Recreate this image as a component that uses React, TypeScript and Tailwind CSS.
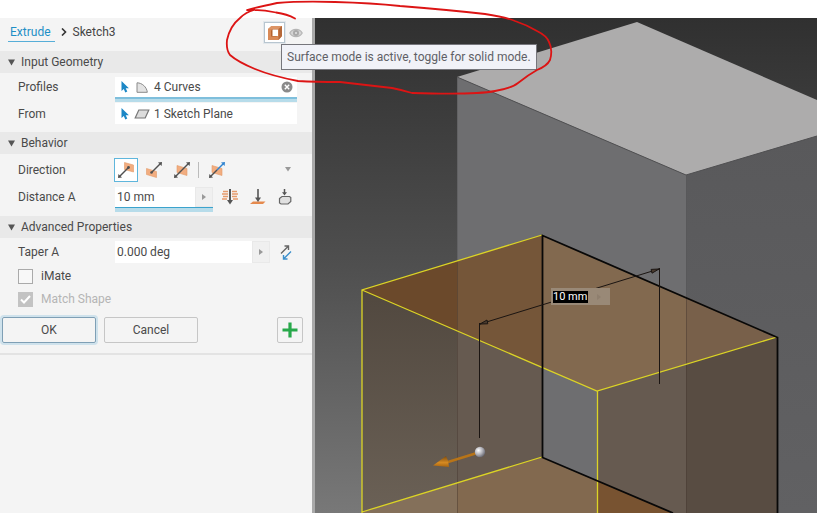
import { useState, type ReactNode } from "react";
import clsx from "clsx";

function Section({ title, children }: { title: string; children: ReactNode }) {
  return (
    <section>
      <h2 className="h-[22px] bg-[#e9e9e9]">
        <button type="button" className="flex h-full w-full items-center gap-1.5 pl-2 text-left text-[#4a4a4a]">
          <svg width="7" height="7" viewBox="0 0 7 7"><path d="M0 0.5h7L3.5 6.5z" fill="#555" /></svg>
          {title}
        </button>
      </h2>
      {children}
    </section>
  );
}

function PickArrow() {
  return (
    <svg width="8" height="12" viewBox="0 0 8 12">
      <path d="M0.5 0v10l2.300-2 1.500 3.500 2-.9-1.600-3.300h3.200z" fill="#1b87c6" />
    </svg>
  );
}

function ProfileIcon() {
  return (
    <svg width="12" height="11" viewBox="0 0 12 11">
      <path d="M1 .8C6 .8 10.8 5 11.3 10.3H1z" fill="#e3e3e3" stroke="#8a8a8a" />
    </svg>
  );
}

function PlaneIcon() {
  return (
    <svg width="16" height="10" viewBox="0 0 16 10">
      <path d="M4.8 1h10L11.2 9h-10z" fill="#dcdcdc" stroke="#777" strokeWidth="1.2" />
    </svg>
  );
}

function SurfaceIcon() {
  return (
    <svg width="16" height="16" viewBox="0 0 16 16">
      <path d="M1 4l3.500-3H15v10l-3.500 4H1z" fill="#d98a57" />
      <path d="M1 4l3.500-3H15l-3.500 3z" fill="#dc9465" />
      <path d="M11.500 4L15 1v10l-3.500 4z" fill="#b5683a" />
      <path d="M4 5.500L5.500 4H11v6l-1.500 1.500H4z" fill="#b5632f" />
      <path d="M5.500 4.500h5.500v6.500H5.500z" fill="#fff" />
    </svg>
  );
}

function EyeIcon() {
  return (
    <svg width="14" height="10" viewBox="0 0 14 10">
      <path d="M.8 5C3.500 .2 10.500 .2 13.200 5 10.500 9.800 3.500 9.800 .8 5z" fill="#d4d4d4" stroke="#b5b5b5" strokeWidth="1.200" />
      <circle cx="7" cy="5" r="3" fill="#a9a9a9" />
      <circle cx="7" cy="5" r="1" fill="#e5e5e5" />
    </svg>
  );
}

type DirectionKind = "default" | "flipped" | "symmetric" | "asymmetric";

function DirectionIcon({ kind }: { kind: DirectionKind }) {
  return (
    <svg width="18" height="18" viewBox="0 0 18 18">
      {kind === "default" && (
        <>
          <path d="M7.500 1.500l9 2.500v7l-9-2.500z" fill="#f2ad80" stroke="#e39a68" strokeWidth=".6" />
          <path d="M3 15l8.500-8.500" stroke="#505050" strokeWidth="1.500" />
          <circle cx="11.500" cy="6.500" r="1.400" fill="#505050" />
          <path d="M1 17l.4-4 3.600 3.600z" fill="#505050" />
        </>
      )}
      {kind === "flipped" && (
        <>
          <path d="M1.500 7.500l10 3v6l-10-3z" fill="#f2ad80" stroke="#e39a68" strokeWidth=".6" />
          <path d="M6.500 11.500L15 3" stroke="#505050" strokeWidth="1.500" />
          <circle cx="6.500" cy="11.500" r="1.300" fill="#505050" />
          <path d="M17 1l-.4 4L13 1.400z" fill="#505050" />
        </>
      )}
      {(kind === "symmetric" || kind === "asymmetric") && (
        <>
          <path d="M4 4.500l10 3v7l-10-3z" fill="#f2ad80" stroke="#e39a68" strokeWidth=".6" />
          <path d="M3 15l6-6" stroke="#505050" strokeWidth="1.500" />
          <path d="M1 17l.4-4 3.600 3.600z" fill="#505050" />
          <path d="M9 9l6-6" stroke={kind === "asymmetric" ? "#2f83d0" : "#505050"} strokeWidth="1.500" />
          <path d="M17 1l-.4 4L13 1.400z" fill={kind === "asymmetric" ? "#2f83d0" : "#505050"} />
        </>
      )}
    </svg>
  );
}

function ThroughAllIcon() {
  return (
    <svg width="16" height="16" viewBox="0 0 16 16">
      <path d="M1 2.500h5M0 5h6M1 7.500h5M0 10h5M10 2.500h5M10 5h6M10 7.500h5M11 10h5" stroke="#e59a6c" strokeWidth="1.300" />
      <path d="M8 0v12" stroke="#555" strokeWidth="2" />
      <path d="M5 11h6l-3 4.500z" fill="#555" />
    </svg>
  );
}

function ToIcon() {
  return (
    <svg width="16" height="16" viewBox="0 0 16 16">
      <path d="M3 12.500h12.500l-2.500 2.500H0z" fill="#e58a4e" />
      <path d="M8 0v9" stroke="#555" strokeWidth="1.600" />
      <path d="M5 8.500h6L8 13z" fill="#555" />
    </svg>
  );
}

function ToNextIcon() {
  return (
    <svg width="14" height="16" viewBox="0 0 14 16">
      <path d="M1.500 9.500l2.500-2h7.500l1.300 1v4L10 15H3l-1.500-1z" fill="#e0e0e0" stroke="#666" strokeWidth="1.200" />
      <path d="M6.500 0v4" stroke="#555" strokeWidth="1.500" />
      <path d="M4 3.200h5L6.500 6.500z" fill="#555" />
    </svg>
  );
}

function FlipIcon() {
  return (
    <svg width="12" height="15" viewBox="0 0 12 15" fill="none" strokeWidth="1.400">
      <path d="M1 8.500l7-7M4.500 1h4v4" stroke="#666" />
      <path d="M11 6.500l-7 7M3.500 10v4h4" stroke="#3c8fcb" />
    </svg>
  );
}

function ValueMenu({ label }: { label: string }) {
  return (
    <button type="button" aria-label={label} className="flex h-full w-[18px] items-center justify-center border border-[#e9e9e9] bg-[#f0f0f0]">
      <svg width="4" height="6" viewBox="0 0 4 6"><path d="M0 0l4 3-4 3z" fill="#999" /></svg>
    </button>
  );
}

const DIRECTIONS: DirectionKind[] = ["default", "flipped", "symmetric", "asymmetric"];

function ExtrudePanel() {
  const [direction, setDirection] = useState<DirectionKind>("default");
  const [distance, setDistance] = useState("10 mm");
  const [taper, setTaper] = useState("0.000 deg");
  const [iMate, setIMate] = useState(false);

  return (
    <aside className="w-[315px] shrink-0 border-r-3 border-[#a9a9a9] bg-[#f4f4f4]">
      <header className="flex h-[33px] items-start justify-between pl-2">
        <nav className="flex h-6 items-center">
          <a href="#extrude" className="flex h-full items-center border-b border-[#57aed8] pr-1 pl-0.5 pt-1 text-[#1e8fc6]">Extrude</a>
          <svg className="mt-1 ml-1.5" width="6" height="8" viewBox="0 0 6 8"><path d="M1 .5L4.500 4 1 7.500" fill="none" stroke="#333" strokeWidth="1.600" /></svg>
          <span className="mt-1 ml-1.5 text-[#444]">Sketch3</span>
        </nav>
        <div className="flex items-center gap-1 pt-1 pr-[9px]">
          <button type="button" aria-label="Surface mode" aria-describedby="mode-tip" className="flex size-[21px] items-center justify-center border border-[#b8c6d0] bg-white ring-1 ring-[#e3e8ec]">
            <SurfaceIcon />
          </button>
          <button type="button" aria-label="Preview"><EyeIcon /></button>
        </div>
      </header>

      <Section title="Input Geometry">
        <div className="flex flex-col gap-px pt-1 pr-[15px] pb-2 pl-[18px]">
          <div className="flex h-[25px]">
            <span className="w-[97px] pt-0.5">Profiles</span>
            <div className="flex flex-1 flex-col">
              <div className="flex h-5 items-center bg-white pr-1 pl-1.5">
                <PickArrow />
                <span className="flex w-[25px] justify-center pr-1 pl-1"><ProfileIcon /></span>
                4 Curves
                <button type="button" aria-label="Clear profiles" className="ml-auto">
                  <svg width="12" height="12" viewBox="0 0 12 12">
                    <circle cx="6" cy="6" r="5.500" fill="#8a8a8a" />
                    <path d="M3.800 3.800l4.400 4.400M8.200 3.800L3.800 8.200" stroke="#fff" strokeWidth="1.400" />
                  </svg>
                </button>
              </div>
              <div className="h-[5px] border-t-2 border-[#7fbfdc] bg-[#b7dcea]" />
            </div>
          </div>
          <div className="flex h-[21px] items-center">
            <span className="w-[97px]">From</span>
            <div className="flex h-full flex-1 items-center bg-white pl-1.5">
              <PickArrow />
              <span className="flex w-[25px] justify-center"><PlaneIcon /></span>
              1 Sketch Plane
            </div>
          </div>
        </div>
      </Section>

      <Section title="Behavior">
        <div className="flex flex-col gap-1 pt-[3px] pr-[15px] pb-1 pl-[18px]">
          <div className="flex h-[25px] items-center">
            <span className="w-24">Direction</span>
            <div className="flex flex-1 items-center gap-1">
              {DIRECTIONS.map((kind) => (
                <button
                  key={kind}
                  type="button"
                  aria-label={kind}
                  onClick={() => setDirection(kind)}
                  className={clsx(
                    "flex size-6 items-center justify-center border",
                    direction === kind ? "border-[#5fb6dc] bg-white" : "border-transparent",
                    kind === "asymmetric" && "ml-0.5",
                  )}
                >
                  <DirectionIcon kind={kind} />
                </button>
              )).flatMap((button, i) => (i === 3 ? [<span key="rule" className="h-4 w-px bg-[#bbb]" />, button] : [button]))}
              <button type="button" aria-label="More directions" className="mr-1.5 ml-auto">
                <svg width="6" height="5" viewBox="0 0 6 5"><path d="M0 0h6L3 4.500z" fill="#999" /></svg>
              </button>
            </div>
          </div>
          <div className="flex h-[26px]">
            <label htmlFor="distance" className="w-[97px] pt-[3px]">Distance A</label>
            <div className="mt-px w-[98px]">
              <div className="flex h-5">
                <input id="distance" value={distance} onChange={(e) => setDistance(e.target.value)} className="min-w-0 flex-1 bg-white pl-0.5 outline-none" />
                <ValueMenu label="Distance options" />
              </div>
              <div className="h-[5px] border-t border-[#3ba3cd] bg-[#b7dcea]" />
            </div>
            <div className="mt-px ml-[9px] flex h-5 items-center gap-3">
              <button type="button" aria-label="Through all"><ThroughAllIcon /></button>
              <button type="button" aria-label="To"><ToIcon /></button>
              <button type="button" aria-label="To next"><ToNextIcon /></button>
            </div>
          </div>
        </div>
      </Section>

      <Section title="Advanced Properties">
        <div className="pt-[3px] pr-[15px] pl-[18px]">
          <div className="flex h-[22px] items-center">
            <label htmlFor="taper" className="w-[97px]">Taper A</label>
            <div className="flex h-full w-[155px]">
              <input id="taper" value={taper} onChange={(e) => setTaper(e.target.value)} className="min-w-0 flex-1 bg-white pl-0.5 outline-none" />
              <ValueMenu label="Taper options" />
            </div>
            <button type="button" aria-label="Flip taper" className="ml-2.5"><FlipIcon /></button>
          </div>
          <label className="mt-px flex h-6 items-center gap-2">
            <input type="checkbox" checked={iMate} onChange={(e) => setIMate(e.target.checked)} className="size-[15px] appearance-none border border-[#aaa] bg-[#f8f8f8] checked:bg-[#777]" />
            iMate
          </label>
          <label className="flex h-[22px] items-center gap-2 text-[#b5b5b5]">
            <span className="grid size-[15px]">
              <input type="checkbox" checked disabled className="col-start-1 row-start-1 size-[15px] appearance-none bg-[#c3c3c3]" />
              <svg className="col-start-1 row-start-1 m-auto" width="11" height="9" viewBox="0 0 11 9"><path d="M1 4.500L4 7.500 10 1" fill="none" stroke="#fff" strokeWidth="2" /></svg>
            </span>
            Match Shape
          </label>
        </div>
      </Section>

      <footer className="flex border-b-2 border-[#e3e3e3] pt-[7px] pr-[9px] pb-2.5 pl-0.5">
        <button type="button" className="h-[26px] w-[94px] rounded-[2px] border border-[#7f9fb5] ring-2 ring-[#cfe2ec]">OK</button>
        <button type="button" className="ml-2 h-[26px] w-[94px] rounded-[2px] border border-[#c6c6c6]">Cancel</button>
        <button type="button" aria-label="Apply and create new" className="ml-auto flex size-[26px] items-center justify-center rounded-[2px] border border-[#c6c6c6]">
          <svg width="16" height="16" viewBox="0 0 16 16"><path d="M8 .5v15M.5 8h15" stroke="#27a84a" strokeWidth="3.200" /></svg>
        </button>
      </footer>
    </aside>
  );
}

function ModelView() {
  return (
    <svg className="block w-full" viewBox="315 18 502 495">
      <defs>
        <linearGradient id="backdrop" x1="0" y1="0" x2="0" y2="1">
          <stop offset="0" stopColor="#303030" />
          <stop offset=".5" stopColor="#4f4f4f" />
          <stop offset="1" stopColor="#787878" />
        </linearGradient>
        <linearGradient id="leftGlass" x1="0" y1="0" x2="0" y2="1">
          <stop offset="0" stopColor="#51483f" />
          <stop offset="1" stopColor="#6b6156" />
        </linearGradient>
        <linearGradient id="sideFace" x1="0" y1="0" x2="0" y2="1">
          <stop offset="0" stopColor="#59595b" />
          <stop offset="1" stopColor="#616163" />
        </linearGradient>
        <radialGradient id="grip" cx=".35" cy=".35" r=".7">
          <stop offset="0" stopColor="#fff" />
          <stop offset=".6" stopColor="#aaaab2" />
          <stop offset="1" stopColor="#66666e" />
        </radialGradient>
        <linearGradient id="cone" x1="0" y1="0" x2="0" y2="1">
          <stop offset="0" stopColor="#7a4a10" />
          <stop offset=".6" stopColor="#d58a22" />
          <stop offset="1" stopColor="#a8640f" />
        </linearGradient>
      </defs>
      <rect x="315" y="18" width="502" height="495" fill="url(#backdrop)" />

      {/* solid block */}
      <path d="M457 77L686 175V513H457z" fill="#6e6e70" />
      <path d="M686 175L817 136V513H686z" fill="url(#sideFace)" />
      <path d="M457 77L637 22 817 100V136L686 175z" fill="#adacac" />
      <path d="M457 77L686 175 817 136" fill="none" stroke="#505052" />
      <path d="M686.500 176V513" stroke="#58585a" />
      <path d="M457.500 78V513" stroke="#626264" />

      {/* extrusion preview faces */}
      <path d="M362 290L457 331V513H362z" fill="url(#leftGlass)" />
      <path d="M457 331L542 367V457L457 483z" fill="#665a50" />
      <path d="M597 391L686 364V513H597z" fill="#665a50" />
      <path d="M686 364L777 337V513H686z" fill="#584c42" />
      <path d="M362 290L457 261V331z" fill="#6b492b" />
      <path d="M457 261L542 235V367L457 331z" fill="#755639" />
      <path d="M542 235L686 297V364L597 391 542 367z" fill="#82694f" />
      <path d="M686 297L777 337 686 364z" fill="#78604a" />
      <path d="M362 512L457 483V513H362z" fill="#84705a" />
      <path d="M457 483L542 457 597 481V513H457z" fill="#82694f" />
      <path d="M597 481L673 513H597z" fill="#785331" />
      <path d="M457.500 261V513M686.500 297V513" stroke="#44382e" strokeOpacity=".45" />

      {/* profile and preview edges */}
      <path d="M362 512L542 457M542 235L362 290V513M362 290L597 391 777 337M597.500 391V513" fill="none" stroke="#dcd425" strokeWidth="1.300" />
      <path d="M673 513L542.500 457.500V235.500L777.500 337.500V513" fill="none" stroke="#080808" strokeWidth="1.800" />

      {/* dimension */}
      <path d="M479.500 323V438M659.500 268V384M480 324L659 269" fill="none" stroke="#1b1512" />
      <path d="M480 324l7-4 .8 3.800zM659 269l-7 4.200-.9-3.800z" fill="#4a3b2e" stroke="#1b1512" />

      {/* drag handle */}
      <path d="M477 453L448 462" stroke="#b87418" strokeWidth="2.500" />
      <path d="M433 465.500L446 456q3 5 3 11z" fill="url(#cone)" />
      <circle cx="480" cy="452" r="5.200" fill="url(#grip)" />
    </svg>
  );
}

export default function App() {
  const [size, setSize] = useState("10 mm");

  return (
    <div className="relative min-h-screen overflow-hidden bg-white pt-[18px] font-[Roboto,sans-serif] text-xs text-[#4a4a4a]">
      <main className="flex">
        <ExtrudePanel />
        <div className="relative min-w-0 flex-1">
          <ModelView />
          <div className="absolute top-[270px] left-[236px] flex h-[17px] w-[59px] items-center bg-[#998977] pl-0.5">
            <input aria-label="Distance" value={size} onChange={(e) => setSize(e.target.value)} className="h-3 w-[35px] bg-black text-[11px] leading-3 text-white outline-none" />
            <svg className="mx-auto" width="4" height="6" viewBox="0 0 4 6"><path d="M0 0l4 3-4 3z" fill="#8f7f6e" /></svg>
          </div>
        </div>
      </main>

      <div id="mode-tip" role="tooltip" className="absolute top-11 left-[281px] flex h-[26px] items-center border border-[#76767c] bg-[#f1f2f8] px-[5px] whitespace-nowrap text-[#606066]">
        Surface mode is active, toggle for solid mode.
      </div>

      {/* hand-drawn mark round the toggle and its tooltip */}
      <svg className="pointer-events-none absolute top-0 left-0" width="560" height="100" viewBox="0 0 560 100" fill="none">
        <path
          d="M295 18.500Q287 14 276 12.500 262 9 247 10 258 7 277 3 300 1 335 2 372 3 400 6 450 10 485 14 505 17 515 21 527 25 537 31 547 36 549 42 553 50 550 60 547 66 537 70 528 75 518 83 512 88 495 91 475 95 412 93 402 90 392 88L340 82Q315 82 298 81 272 76 255 69 238 62 230 55 226 50 227 40 230 26 240 18 246 12 254 10"
          stroke="#dc1414"
          strokeWidth="1.800"
          strokeLinecap="round"
          strokeLinejoin="round"
        />
      </svg>
    </div>
  );
}
